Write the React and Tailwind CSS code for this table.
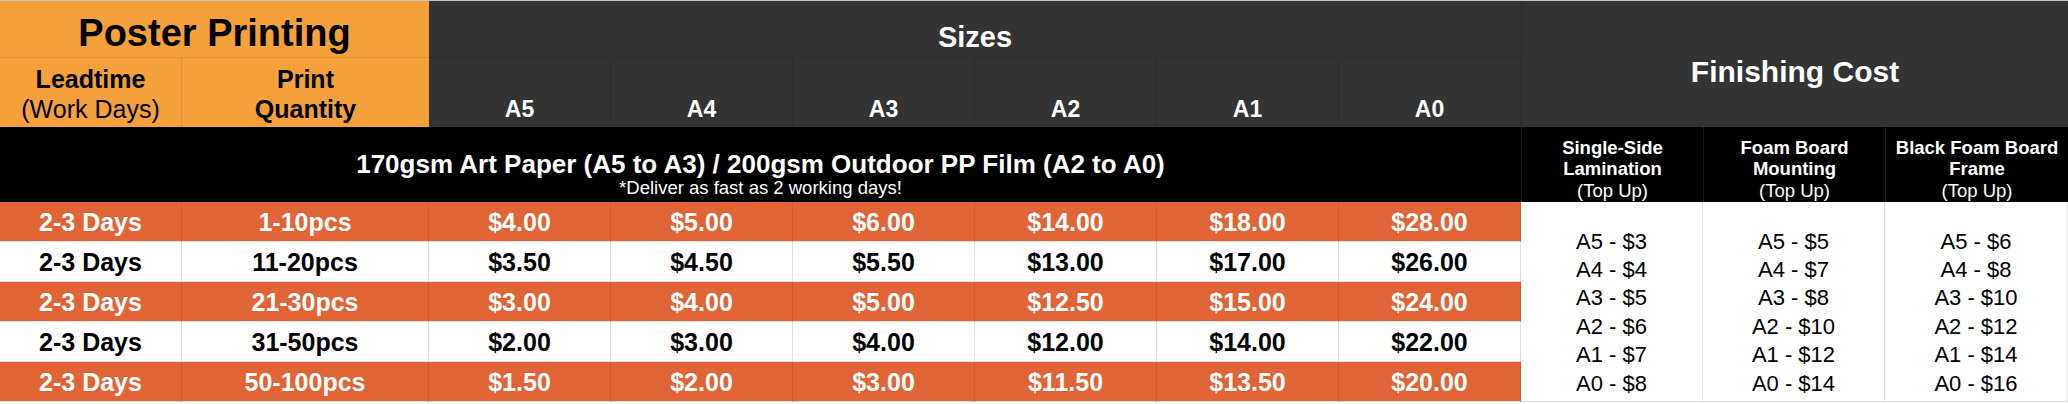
import React from "react";

const ROWS = [
  ["2-3 Days", "1-10pcs", "$4.00", "$5.00", "$6.00", "$14.00", "$18.00", "$28.00"],
  ["2-3 Days", "11-20pcs", "$3.50", "$4.50", "$5.50", "$13.00", "$17.00", "$26.00"],
  ["2-3 Days", "21-30pcs", "$3.00", "$4.00", "$5.00", "$12.50", "$15.00", "$24.00"],
  ["2-3 Days", "31-50pcs", "$2.00", "$3.00", "$4.00", "$12.00", "$14.00", "$22.00"],
  ["2-3 Days", "50-100pcs", "$1.50", "$2.00", "$3.00", "$11.50", "$13.50", "$20.00"],
];

const SIZES = ["A5", "A4", "A3", "A2", "A1", "A0"];

const FINISHING = [
  { title: ["Single-Side", "Lamination"], prices: ["A5 - $3", "A4 - $4", "A3 - $5", "A2 - $6", "A1 - $7", "A0 - $8"] },
  { title: ["Foam Board", "Mounting"], prices: ["A5 - $5", "A4 - $7", "A3 - $8", "A2 - $10", "A1 - $12", "A0 - $14"] },
  { title: ["Black Foam Board", "Frame"], prices: ["A5 - $6", "A4 - $8", "A3 - $10", "A2 - $12", "A1 - $14", "A0 - $16"] },
];

// grid placement classes written out in full so tailwind picks them up
const ROW_START = ["row-start-4", "row-start-5", "row-start-6", "row-start-7", "row-start-8"];
const COL_START = ["col-start-1", "col-start-2", "col-start-3", "col-start-4", "col-start-5", "col-start-6", "col-start-7", "col-start-8"];
const FIN_COL = ["col-start-9", "col-start-10", "col-start-11"];

function DataCell({ value, row, col }) {
  const orange = row % 2 === 0;
  return (
    <div
      className={`${ROW_START[row]} ${COL_START[col]} flex items-center justify-center pt-[3px] border-b border-r border-b-[#e0e0e0] text-[25px] font-bold ${
        orange ? "bg-[#e06436] text-white border-r-[#cf5a30]" : "bg-white text-black border-r-[#e0e0e0]"
      }`}
    >
      {value}
    </div>
  );
}

export default function App() {
  return (
    <div className="w-[2068px] h-[404px] bg-white border-t border-[#c4c4c4]" style={{ fontFamily: '"Liberation Sans", Arial, sans-serif' }}>
      <div className="grid grid-cols-[182px_247px_repeat(8,182px)_1fr] grid-rows-[57px_69px_75px_repeat(5,40px)]">
        {/* header row 1 */}
        <div className="col-start-1 col-span-2 row-start-1 flex items-end justify-center pb-[4px] bg-[#f4a03b] border-b border-[#e08f34] text-[38px] leading-[40px] font-bold text-black">
          Poster Printing
        </div>
        <div className="col-start-3 col-span-6 row-start-1 flex items-end justify-center pb-[4px] bg-[#333333] border-b border-[#2d2d2d] text-[29px] leading-[32px] font-bold text-white">
          Sizes
        </div>
        <div className="col-start-9 col-span-3 row-start-1 row-span-2 flex items-center justify-center pt-[15px] bg-[#333333] border-l border-[#2d2d2d] text-[30px] font-bold text-white">
          Finishing Cost
        </div>

        {/* header row 2 */}
        <div className="col-start-1 row-start-2 flex flex-col items-center justify-end pb-[3px] bg-[#f4a03b] border-r border-[#e08f34] text-[25px] leading-[30px] text-black">
          <span className="font-bold">Leadtime</span>
          <span>(Work Days)</span>
        </div>
        <div className="col-start-2 row-start-2 flex flex-col items-center justify-end pb-[3px] bg-[#f4a03b] text-[25px] leading-[30px] font-bold text-black">
          <span>Print</span>
          <span>Quantity</span>
        </div>
        {SIZES.map((s, i) => (
          <div
            key={s}
            className={`${COL_START[i + 2]} row-start-2 flex items-end justify-center pb-[3px] bg-[#333333] border-r border-[#2d2d2d] text-[23px] leading-[30px] font-bold text-white`}
          >
            {s}
          </div>
        ))}

        {/* paper row */}
        <div className="col-start-1 col-span-8 row-start-3 flex flex-col items-center justify-end pb-[4px] bg-black text-white">
          <span className="text-[26px] leading-[28px] font-bold">170gsm Art Paper (A5 to A3) / 200gsm Outdoor PP Film (A2 to A0)</span>
          <span className="text-[18.5px] leading-[20px]">*Deliver as fast as 2 working days!</span>
        </div>
        {FINISHING.map((f, i) => (
          <div
            key={f.title[0]}
            className={`${FIN_COL[i]} row-start-3 flex flex-col items-center justify-end pb-[1px] bg-black border-l border-[#1c1c1c] text-[18.5px] leading-[21.5px] text-white`}
          >
            <span className="font-bold">{f.title[0]}</span>
            <span className="font-bold">{f.title[1]}</span>
            <span>(Top Up)</span>
          </div>
        ))}

        {/* price rows */}
        {ROWS.map((r, ri) => r.map((v, ci) => <DataCell key={`${ri}-${ci}`} value={v} row={ri} col={ci} />))}

        {FINISHING.map((f, i) => (
          <div
            key={`p-${f.title[0]}`}
            className={`${FIN_COL[i]} row-start-4 row-span-5 flex flex-col items-center justify-end pb-[3px] bg-white border-r border-b border-[#e0e0e0] text-[22px] leading-[28.4px] text-black`}
          >
            {f.prices.map((p) => (
              <span key={p}>{p}</span>
            ))}
          </div>
        ))}
      </div>
    </div>
  );
}
